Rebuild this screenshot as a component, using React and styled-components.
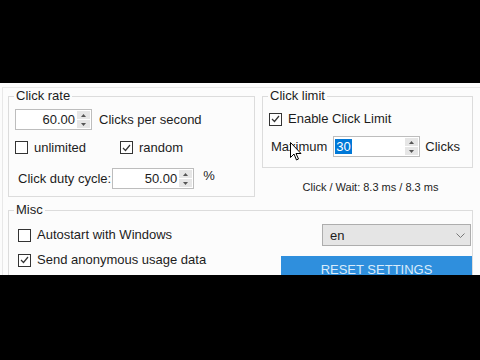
import styled, { createGlobalStyle } from "styled-components"

const Global = createGlobalStyle`
  html, body {
    margin: 0;
    background: #000;
  }
  body {
    font-family: "Liberation Sans", Arial, sans-serif;
    color: #1c1c1c;
  }
`

const Frame = styled.div`
  position: relative;
  margin-top: 83px;
  width: 480px;
  height: 192px;
  background: #fcfcfc;
  overflow: hidden;
`

const Panel = styled.div`
  margin: 4px 0 0 2px;
  border-top: 1px solid #e8e8e8;
  border-left: 1px solid #e8e8e8;
  height: 100%;
`

const Layout = styled.div`
  display: grid;
  grid-template-columns: 247px 211px;
  column-gap: 7px;
  align-items: start;
  padding: 1px 0 0 5px;
`

const Group = styled.fieldset`
  margin: ${p => p.$top || 0}px 0 0 0;
  padding: 0;
  min-width: 0;
  border: 1px solid #dcdcdc;
  grid-column: ${p => p.$wide ? "1 / span 2" : "auto"};
`

const Legend = styled.legend`
  margin-left: 5px;
  padding: 0 2px;
  font-size: 13px;
  line-height: 14px;
`

const Body = styled.div`
  padding: ${p => p.$pad};
`

const Row = styled.div`
  display: flex;
  align-items: center;
  height: ${p => p.$h || 14}px;
  margin-top: ${p => p.$mt || 0}px;
`

const Label = styled.span`
  font-size: 13px;
  line-height: 14px;
  white-space: nowrap;
  margin-left: ${p => p.$ml || 0}px;
`

const Percent = styled(Label)`
  align-self: flex-start;
  margin-top: 1px;
`

const NumberBox = styled.div`
  box-sizing: border-box;
  display: flex;
  width: ${p => p.$w}px;
  height: 21px;
  margin-left: ${p => p.$ml || 0}px;
  border: 1px solid #bdbdbd;
  background: #fff;
`

const Value = styled.div`
  flex: 1;
  display: flex;
  align-items: center;
  justify-content: ${p => p.$left ? "flex-start" : "flex-end"};
  padding: 0 2px 0 1px;
  font-size: 13px;
`

const Selected = styled.span`
  background: #0078d7;
  color: #fff;
  padding: 0 1px;
  line-height: 15px;
`

const Spin = styled.div`
  width: 13px;
  margin: 1px 1px 1px 0;
  display: flex;
  flex-direction: column;
  gap: 1px;
`

const SpinButton = styled.div`
  flex: 1;
  display: flex;
  align-items: center;
  justify-content: center;
  background: #e6e6e6;
`

const Check = styled.label`
  display: flex;
  align-items: center;
  gap: 6px;
  width: ${p => p.$w ? `${p.$w}px` : "auto"};
  margin-left: ${p => p.$ml || 0}px;
`

const Box = styled.span`
  box-sizing: border-box;
  width: 13px;
  height: 13px;
  border: 1px solid #333;
  background: #fff;
  display: flex;
  align-items: center;
  justify-content: center;
`

const Info = styled.div`
  margin-top: 12px;
  padding-left: 6px;
  text-align: center;
  font-size: 11px;
  line-height: 14px;
`

const MiscBody = styled.div`
  display: flex;
  justify-content: space-between;
`

const MiscLeft = styled.div`
  padding: 11px 0 0 9px;
  display: flex;
  flex-direction: column;
  gap: 11px;
`

const MiscRight = styled.div`
  padding-top: 7px;
  display: flex;
  flex-direction: column;
  align-items: flex-end;
`

const Select = styled.div`
  box-sizing: border-box;
  width: 149px;
  height: 22px;
  margin-right: 1px;
  padding: 0 5px 0 7px;
  display: flex;
  align-items: center;
  justify-content: space-between;
  background: #e5e5e5;
  border: 1px solid #adadad;
  font-size: 13px;
`

const ResetButton = styled.button`
  width: 191px;
  height: 26px;
  margin-top: 10px;
  border: none;
  background: #2f8fdd;
  color: #d9ecfb;
  font-family: "Liberation Sans", Arial, sans-serif;
  font-size: 13px;
  padding: 0;
`

const Cursor = styled.svg`
  position: absolute;
  left: 290px;
  top: 59px;
`

const Arrow = ({ up }) => (
  <svg width="5" height="3" viewBox="0 0 5 3">
    <path d={up ? "M0 3 L2.5 0 L5 3 Z" : "M0 0 L2.5 3 L5 0 Z"} fill="#555" />
  </svg>
)

const Spinner = () => (
  <Spin>
    <SpinButton><Arrow up /></SpinButton>
    <SpinButton><Arrow /></SpinButton>
  </Spin>
)

const CheckBox = ({ checked, children, w, ml }) => (
  <Check $w={w} $ml={ml}>
    <Box>
      {checked && (
        <svg width="9" height="8" viewBox="0 0 9 8">
          <polyline points="1,4 3.5,6.5 8,1" fill="none" stroke="#333" strokeWidth="1.2" />
        </svg>
      )}
    </Box>
    <Label>{children}</Label>
  </Check>
)

const App = () => {
  return (
    <>
      <Global />
      <Frame>
        <Panel>
          <Layout>
            <Group>
              <Legend>Click rate</Legend>
              <Body $pad="6px 0 7px 6px">
                <Row $h={21}>
                  <NumberBox $w={77}>
                    <Value>60.00</Value>
                    <Spinner />
                  </NumberBox>
                  <Label $ml={7}>Clicks per second</Label>
                </Row>
                <Row $mt={11} $h={13}>
                  <CheckBox w={105}>unlimited</CheckBox>
                  <CheckBox checked>random</CheckBox>
                </Row>
                <Row $mt={14} $h={21}>
                  <Label $ml={3}>Click duty cycle:</Label>
                  <NumberBox $w={82} $ml={1}>
                    <Value>50.00</Value>
                    <Spinner />
                  </NumberBox>
                  <Percent $ml={9}>%</Percent>
                </Row>
              </Body>
            </Group>

            <div>
              <Group>
                <Legend>Click limit</Legend>
                <Body $pad="9px 0 10px 6px">
                  <Row>
                    <CheckBox checked>Enable Click Limit</CheckBox>
                  </Row>
                  <Row $mt={10} $h={21}>
                    <Label $ml={2}>Maximum</Label>
                    <NumberBox $w={87} $ml={6}>
                      <Value $left><Selected>30</Selected></Value>
                      <Spinner />
                    </NumberBox>
                    <Label $ml={5}>Clicks</Label>
                  </Row>
                </Body>
              </Group>
              <Info>Click / Wait: 8.3 ms / 8.3 ms</Info>
            </div>

            <Group $wide $top={6}>
              <Legend>Misc</Legend>
              <MiscBody>
                <MiscLeft>
                  <CheckBox>Autostart with Windows</CheckBox>
                  <CheckBox checked>Send anonymous usage data</CheckBox>
                </MiscLeft>
                <MiscRight>
                  <Select>
                    <span>en</span>
                    <svg width="9" height="5" viewBox="0 0 9 5">
                      <polyline points="0.5,0.5 4.5,4.5 8.5,0.5" fill="none" stroke="#777" strokeWidth="1" />
                    </svg>
                  </Select>
                  <ResetButton>RESET SETTINGS</ResetButton>
                </MiscRight>
              </MiscBody>
            </Group>
          </Layout>
        </Panel>
        <Cursor width="12" height="19" viewBox="0 0 12 19">
          <path d="M0.5 0.5 L0.5 15.5 L4 12 L6.5 18 L8.5 17 L6 11.5 L11 11.5 Z" fill="#fff" stroke="#000" strokeWidth="1" strokeLinejoin="round" />
        </Cursor>
      </Frame>
    </>
  )
}

export default App
